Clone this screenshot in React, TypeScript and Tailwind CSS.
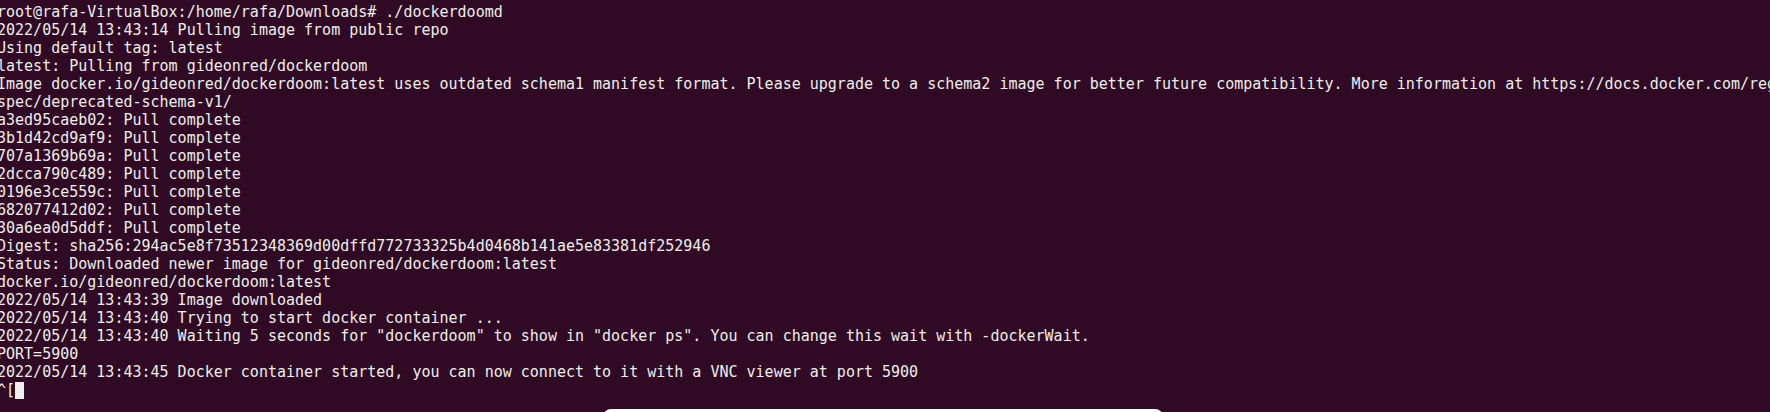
const lines = [
  'root@rafa-VirtualBox:/home/rafa/Downloads# ./dockerdoomd',
  '2022/05/14 13:43:14 Pulling image from public repo',
  'Using default tag: latest',
  'latest: Pulling from gideonred/dockerdoom',
  'Image docker.io/gideonred/dockerdoom:latest uses outdated schema1 manifest format. Please upgrade to a schema2 image for better future compatibility. More information at https://docs.docker.com/registry/',
  'spec/deprecated-schema-v1/',
  'a3ed95caeb02: Pull complete',
  '3b1d42cd9af9: Pull complete',
  '707a1369b69a: Pull complete',
  '2dcca790c489: Pull complete',
  '0196e3ce559c: Pull complete',
  '682077412d02: Pull complete',
  '30a6ea0d5ddf: Pull complete',
  'Digest: sha256:294ac5e8f73512348369d00dffd772733325b4d0468b141ae5e83381df252946',
  'Status: Downloaded newer image for gideonred/dockerdoom:latest',
  'docker.io/gideonred/dockerdoom:latest',
  '2022/05/14 13:43:39 Image downloaded',
  '2022/05/14 13:43:40 Trying to start docker container ...',
  '2022/05/14 13:43:40 Waiting 5 seconds for "dockerdoom" to show in "docker ps". You can change this wait with -dockerWait.',
  'PORT=5900',
  '2022/05/14 13:43:45 Docker container started, you can now connect to it with a VNC viewer at port 5900',
];

const App = () => {
  return (
    <div className="relative w-[1770px] h-[412px] overflow-hidden bg-[#300a24] text-[#eeeeec]">
      <div className="ml-[-3px] pt-[3px] font-['DejaVu_Sans_Mono',monospace] text-[15px] leading-[18px] whitespace-pre">
        {lines.map((line, i) => (
          <div key={i}>{line}</div>
        ))}
        <div className="flex items-center">
          <span>^[</span>
          <span className="inline-block w-[9px] h-[17px] bg-[#eeeeec]" />
        </div>
      </div>

      {/* toast peeking in from the bottom */}
      <div className="absolute left-[603px] top-[409px] w-[560px] h-[20px] rounded-t-[8px] bg-white" />
    </div>
  );
};

export default App;
